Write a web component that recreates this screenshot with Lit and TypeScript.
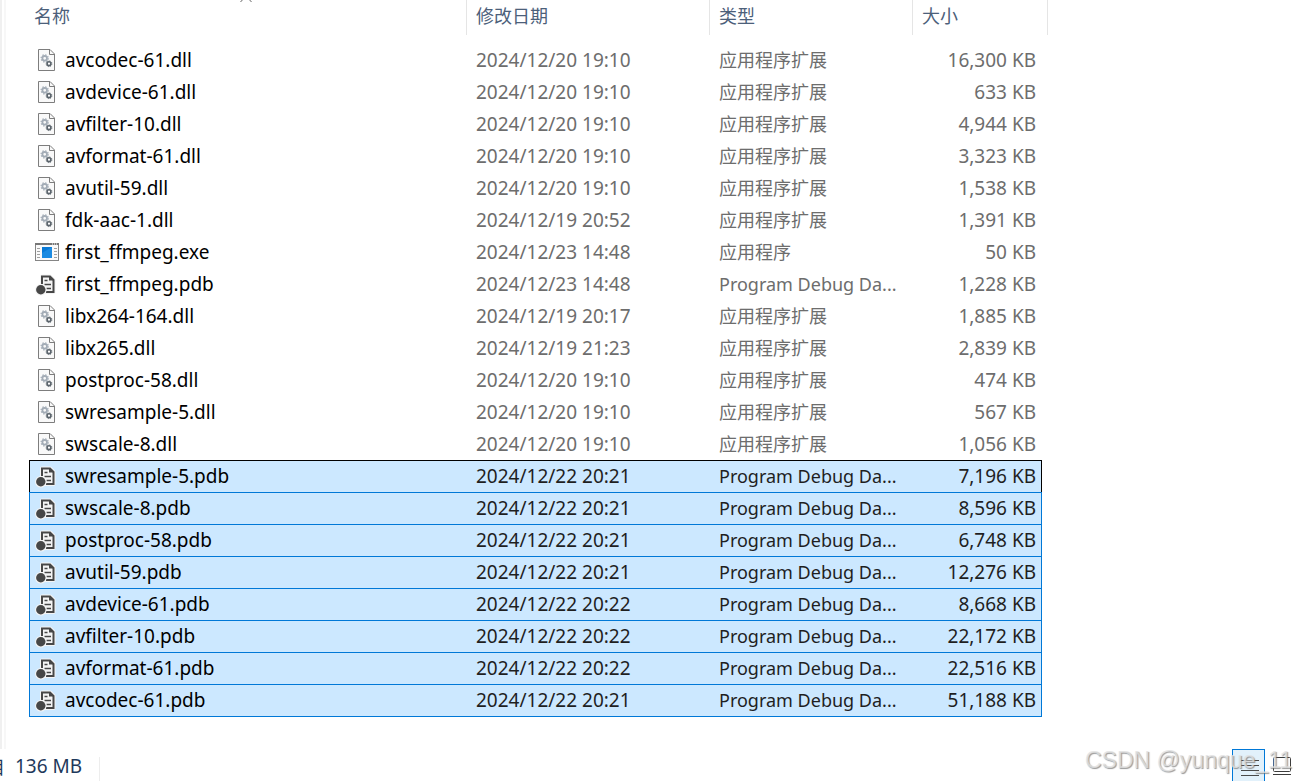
import { LitElement, html, css, svg } from "lit";
import { customElement } from "lit/decorators.js";
import { classMap } from "lit/directives/class-map.js";

type Kind = "dll" | "exe" | "pdb";

interface Entry {
  name: string;
  date: string;
  size: string;
  selected?: boolean;
}

const TYPES: Record<Kind, string> = {
  dll: "应用程序扩展",
  exe: "应用程序",
  pdb: "Program Debug Da...",
};

const FILES: Entry[] = [
  { name: "avcodec-61.dll", date: "2024/12/20 19:10", size: "16,300 KB" },
  { name: "avdevice-61.dll", date: "2024/12/20 19:10", size: "633 KB" },
  { name: "avfilter-10.dll", date: "2024/12/20 19:10", size: "4,944 KB" },
  { name: "avformat-61.dll", date: "2024/12/20 19:10", size: "3,323 KB" },
  { name: "avutil-59.dll", date: "2024/12/20 19:10", size: "1,538 KB" },
  { name: "fdk-aac-1.dll", date: "2024/12/19 20:52", size: "1,391 KB" },
  { name: "first_ffmpeg.exe", date: "2024/12/23 14:48", size: "50 KB" },
  { name: "first_ffmpeg.pdb", date: "2024/12/23 14:48", size: "1,228 KB" },
  { name: "libx264-164.dll", date: "2024/12/19 20:17", size: "1,885 KB" },
  { name: "libx265.dll", date: "2024/12/19 21:23", size: "2,839 KB" },
  { name: "postproc-58.dll", date: "2024/12/20 19:10", size: "474 KB" },
  { name: "swresample-5.dll", date: "2024/12/20 19:10", size: "567 KB" },
  { name: "swscale-8.dll", date: "2024/12/20 19:10", size: "1,056 KB" },
  { name: "swresample-5.pdb", date: "2024/12/22 20:21", size: "7,196 KB", selected: true },
  { name: "swscale-8.pdb", date: "2024/12/22 20:21", size: "8,596 KB", selected: true },
  { name: "postproc-58.pdb", date: "2024/12/22 20:21", size: "6,748 KB", selected: true },
  { name: "avutil-59.pdb", date: "2024/12/22 20:21", size: "12,276 KB", selected: true },
  { name: "avdevice-61.pdb", date: "2024/12/22 20:22", size: "8,668 KB", selected: true },
  { name: "avfilter-10.pdb", date: "2024/12/22 20:22", size: "22,172 KB", selected: true },
  { name: "avformat-61.pdb", date: "2024/12/22 20:22", size: "22,516 KB", selected: true },
  { name: "avcodec-61.pdb", date: "2024/12/22 20:21", size: "51,188 KB", selected: true },
];

const FOCUSED = "swresample-5.pdb";

const ICONS = {
  dll: svg`
    <path d="M4.5 1.5H16l4.500 4.500v16.500h-16z" fill="#f9f9f9" stroke="#7d7d7d"/>
    <path d="M15.500 1.500v5h5" fill="none" stroke="#7d7d7d"/>
    <circle cx="10.700" cy="10.300" r="2.300" fill="none" stroke="#a3acb6" stroke-width="1.800"/>
    <circle cx="10.700" cy="10.300" r="3.600" fill="none" stroke="#a3acb6" stroke-width="1.200" stroke-dasharray="1.400 1.427"/>
    <circle cx="15" cy="15.700" r="1.900" fill="#fff" stroke="#5b646c" stroke-width="1.600"/>
    <circle cx="15" cy="15.700" r="2.900" fill="none" stroke="#5b646c" stroke-width="0.800" stroke-dasharray="1.200 1.078"/>`,
  exe: svg`
    <rect x="1.500" y="3.500" width="23" height="17" fill="#fafafa" stroke="#858585"/>
    <path d="M1 4h24" stroke="#777" stroke-width="2"/>
    <path d="M18 4h1m1 0h1m1 0h1" stroke="#fff"/>
    <path d="M3 8.500h3M3 11.500h3M3 14.500h3M3 17.500h3M20 8.500h3M20 11.500h3M20 14.500h3M20 17.500h3" stroke="#a0a0a0"/>
    <rect x="8" y="7" width="10" height="11" fill="#0a7ad6"/>
    <path d="M8 13l10-6v11H8z" fill="#1c8be2"/>`,
  pdb: svg`
    <path d="M8 4.500h8l3.500 3.500v12H8z" fill="#f4f4f4" stroke="#f4f4f4" stroke-width="4" stroke-linejoin="round"/>
    <path d="M8 12V4.500h8l3.500 3.500v12H12" fill="none" stroke="#474747" stroke-width="2"/>
    <path d="M15 4v4.500h5z" fill="#474747"/>
    <path d="M10.500 8.500h3M10.500 12.500h6.500M12.500 16.500h4.500" stroke="#474747" stroke-width="1.500"/>
    <circle cx="6.800" cy="17.800" r="5.800" fill="#f4f4f4"/>
    <circle cx="6.800" cy="17.800" r="4.700" fill="#474747"/>`,
};

@customElement("app-root")
export class AppRoot extends LitElement {
  static styles = css`
    :host {
      display: flex;
      flex-direction: column;
      position: relative;
      height: 100vh;
      overflow: hidden;
      background: #fff;
      font-family: "Noto Sans", "Noto Sans CJK SC", sans-serif;
      font-size: 19px;
      line-height: 24px;
      color: #000;
    }
    .browser {
      flex: 1;
      min-height: 0;
      display: flex;
    }
    .splitter {
      flex: none;
      width: 2px;
      margin-right: 2px;
      background: #f0f0f0;
    }
    .edge {
      flex: none;
      width: 2px;
      margin-right: 23px;
      background: #f7f7f7;
    }
    .files {
      table-layout: fixed;
      width: 1019px;
      border-collapse: separate;
      border-spacing: 0;
      align-self: flex-start;
    }
    .c-name { width: 438px; }
    .c-date { width: 243px; }
    .c-type { width: 203px; }
    .c-size { width: 129px; }
    .c-rest { width: 6px; }
    th {
      position: relative;
      height: 35px;
      padding: 0;
      border-right: 1px solid #e5e5e5;
      font-weight: 400;
      vertical-align: top;
    }
    .sort {
      display: block;
      width: 100%;
      height: 30px;
      margin: 0;
      padding: 0 9px;
      border: 0;
      background: none;
      text-align: left;
      font-family: "Noto Sans CJK SC", sans-serif;
      font-size: 18px;
      line-height: 30px;
      color: #4c607a;
    }
    .sort.first { padding-left: 5px; }
    .chevron {
      position: absolute;
      top: 0;
      left: 50%;
      margin-left: -8px;
      width: 12px;
      height: 2px;
    }
    .spacer td { height: 9px; padding: 0; }
    .row td {
      box-sizing: border-box;
      height: 32px;
      padding: 0 9px 1px;
      border-top: 1px solid transparent;
      white-space: nowrap;
      color: #6d6d6d;
    }
    .row .name {
      padding-left: 4px;
      border-left: 1px solid transparent;
      color: #000;
    }
    .label {
      display: flex;
      align-items: center;
      gap: 6px;
    }
    .icon {
      flex: none;
      width: 25px;
      height: 24px;
    }
    .row .type { font-size: 18px; }
    .row .han {
      padding-bottom: 3px;
      font-family: "Noto Sans CJK SC", sans-serif;
    }
    .row .size {
      padding-right: 5px;
      border-right: 1px solid transparent;
      text-align: right;
    }
    .row.selected td {
      background: #cce8ff;
      border-color: #0078d7;
      color: #1f1f1f;
    }
    .row.selected .name { color: #000; }
    .row.selected.focused td { border-color: #000; }
    .row.selected:last-child td {
      height: 33px;
      border-bottom: 1px solid #0078d7;
    }
    .status {
      flex: none;
      height: 32px;
      display: flex;
      align-items: flex-start;
      color: #1e395b;
    }
    .count {
      display: flex;
      justify-content: flex-end;
      width: 5px;
      height: 32px;
      overflow: hidden;
      white-space: nowrap;
      font-family: "Noto Sans CJK SC", sans-serif;
      font-size: 18px;
      line-height: 34px;
    }
    .total {
      margin-left: 10px;
      padding-right: 17px;
      line-height: 34px;
    }
    .divider {
      width: 1px;
      height: 24px;
      margin-top: 8px;
      background: #ededed;
    }
    .views {
      display: flex;
      margin-left: auto;
    }
    .view {
      box-sizing: border-box;
      width: 31px;
      height: 33px;
      padding: 0;
      border: 1px solid transparent;
      background: none;
    }
    .view.on {
      width: 33px;
      border-color: #0078d7;
      background: #e2f1fb;
    }
    .view svg {
      display: block;
      width: 29px;
      height: 31px;
    }
    .watermark {
      position: absolute;
      right: 4px;
      bottom: 6px;
      font-family: "Liberation Sans", sans-serif;
      font-size: 23px;
      line-height: 30px;
      color: rgba(226, 226, 226, 0.8);
      text-shadow: 1px 1px 1px rgba(110, 110, 110, 0.7);
      pointer-events: none;
    }
  `;

  private renderRow(file: Entry) {
    const kind = file.name.slice(-3) as Kind;
    const row = classMap({
      row: true,
      selected: !!file.selected,
      focused: file.name === FOCUSED,
    });
    return html`<tr class=${row} aria-selected=${file.selected ? "true" : "false"}>
      <td class="name">
        <span class="label">
          <svg class="icon" viewBox="0 0 25 24" aria-hidden="true">${ICONS[kind]}</svg>
          <span>${file.name}</span>
        </span>
      </td>
      <td>${file.date}</td>
      <td class=${classMap({ type: true, han: kind !== "pdb" })}>${TYPES[kind]}</td>
      <td class="size">${file.size}</td>
    </tr>`;
  }

  render() {
    return html`
      <main class="browser">
        <div class="splitter"></div>
        <div class="edge"></div>
        <table class="files">
          <colgroup>
            <col class="c-name" /><col class="c-date" /><col class="c-type" />
            <col class="c-size" /><col class="c-rest" />
          </colgroup>
          <thead>
            <tr>
              <th aria-sort="ascending">
                <button class="sort first">名称</button>
                <svg class="chevron" viewBox="0 0 12 2" aria-hidden="true">
                  <path d="M0.500 2L6-4l5.500 6" fill="none" stroke="#666" />
                </svg>
              </th>
              <th><button class="sort">修改日期</button></th>
              <th><button class="sort">类型</button></th>
              <th colspan="2"><button class="sort">大小</button></th>
            </tr>
          </thead>
          <tbody>
            <tr class="spacer"><td colspan="5"></td></tr>
            ${FILES.map((file) => this.renderRow(file))}
          </tbody>
        </table>
      </main>
      <footer class="status">
        <span class="count">选中 8 个项目</span>
        <span class="total">136 MB</span>
        <span class="divider"></span>
        <div class="views">
          <button class="view on" aria-label="详细信息">
            <svg viewBox="0 0 29 31" aria-hidden="true">
              <path d="M8 10.500h18M8 15.500h18M8 20.500h18M8 25.500h18" stroke="#4a4a4a" />
            </svg>
          </button>
          <button class="view" aria-label="大图标">
            <svg viewBox="0 0 29 31" aria-hidden="true">
              <rect x="7.500" y="7.500" width="17" height="14" rx="1" fill="none" stroke="#3d3d3d" />
              <path d="M7 24.500h18" stroke="#3d3d3d" />
            </svg>
          </button>
        </div>
      </footer>
      <div class="watermark">CSDN @yunque_11</div>
    `;
  }
}
